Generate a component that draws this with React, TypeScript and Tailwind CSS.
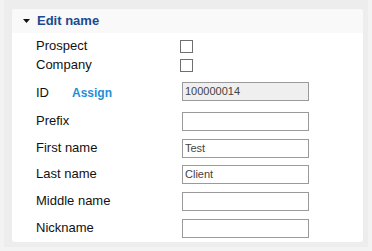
import React from "react";

const font = { fontFamily: '"Liberation Sans", Arial, sans-serif' };

function Checkbox() {
  return <div className="w-[13px] h-[13px] border border-[#6f6f6f] bg-white" />;
}

function TextBox({ value = "", disabled = false }: { value?: string; disabled?: boolean }) {
  return (
    <div
      className={
        "w-[127px] h-[19px] border border-[#9a9a9a] pl-[2px] text-[11px] leading-[17px] text-[#444] " +
        (disabled ? "bg-[#efefef]" : "bg-white")
      }
    >
      {value}
    </div>
  );
}

const fields: { label: string; value?: string; h: string }[] = [
  { label: "Prefix", h: "h-[27px]" },
  { label: "First name", value: "Test", h: "h-[26px]" },
  { label: "Last name", value: "Client", h: "h-[27px]" },
  { label: "Middle name", h: "h-[27px]" },
  { label: "Nickname", h: "h-[19px]" },
];

export default function App() {
  return (
    <div className="w-[372px] h-[251px] bg-[#f3f3f3] px-1 pb-1" style={font}>
      <div className="h-full bg-[#ededed] px-2 pt-[9px]">
        <div className="w-[351px] bg-white rounded-[3px] overflow-hidden pb-[4px]">
          <div className="h-6 bg-[#f9f9f9] flex items-center pl-[11px]">
            <svg width="7" height="4" viewBox="0 0 7 4" className="mr-[7px]">
              <polygon points="0,0 7,0 3.5,4" fill="#111" />
            </svg>
            <span className="text-[13px] font-bold text-[#1b4a8e]">Edit name</span>
          </div>

          <div className="pl-6 pt-1 text-[13px] text-[#111]">
            <div className="flex items-center h-[19px]">
              <span className="w-[144px] -mt-[1px]">Prospect</span>
              <Checkbox />
            </div>
            <div className="flex items-center h-[19px]">
              <span className="w-[144px] -mt-[1px]">Company</span>
              <Checkbox />
            </div>

            <div className="flex items-start h-[37px] pt-[7px]">
              <div className="w-[146px] flex items-center pt-[1px]">
                <span className="w-9">ID</span>
                <span className="text-[12px] font-bold text-[#1e8fd6]">Assign</span>
              </div>
              <TextBox value="100000014" disabled />
            </div>

            {fields.map((f) => (
              <div key={f.label} className={"flex items-start " + f.h}>
                <span className="w-[146px] -mt-[1px]">{f.label}</span>
                <TextBox value={f.value} />
              </div>
            ))}
          </div>
        </div>
      </div>
    </div>
  );
}
